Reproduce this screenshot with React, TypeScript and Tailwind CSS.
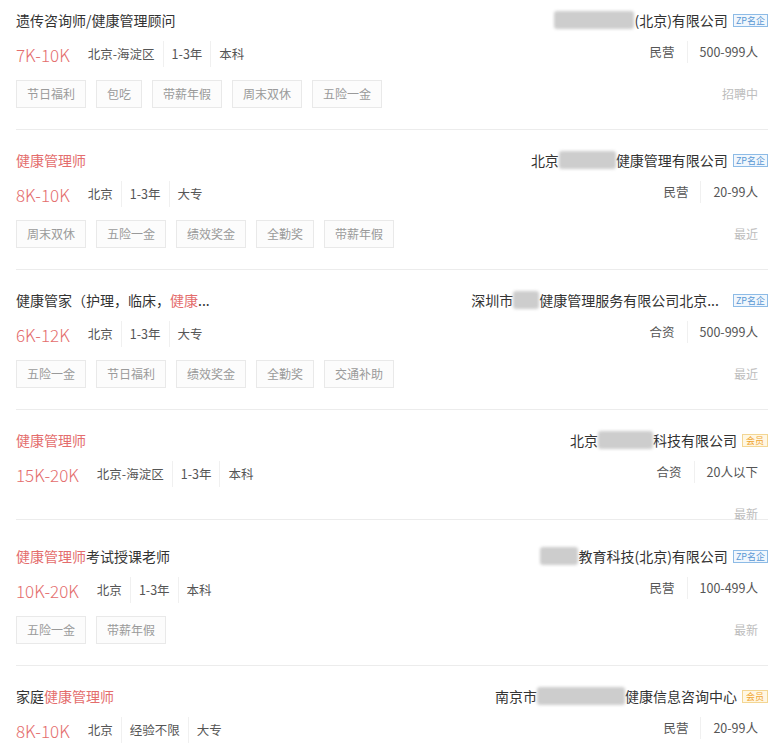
import type { ReactNode } from 'react'

type Part = string | { hl: string } | { blur: number }

type Job = {
  title: Part[]
  salary: string
  meta: string[]
  company: Part[]
  badge: 'zp' | 'vip'
  info: string[]
  tags: string[]
  status: string
  first?: boolean
  short?: boolean
  wideGap?: boolean
}

const jobs: Job[] = [
  {
    title: ['遗传咨询师/健康管理顾问'],
    salary: '7K-10K',
    meta: ['北京-海淀区', '1-3年', '本科'],
    company: [{ blur: 80 }, '(北京)有限公司'],
    badge: 'zp',
    info: ['民营', '500-999人'],
    tags: ['节日福利', '包吃', '带薪年假', '周末双休', '五险一金'],
    status: '招聘中',
    first: true,
  },
  {
    title: [{ hl: '健康管理师' }],
    salary: '8K-10K',
    meta: ['北京', '1-3年', '大专'],
    company: ['北京', { blur: 57 }, '健康管理有限公司'],
    badge: 'zp',
    info: ['民营', '20-99人'],
    tags: ['周末双休', '五险一金', '绩效奖金', '全勤奖', '带薪年假'],
    status: '最近',
  },
  {
    title: ['健康管家（护理，临床，', { hl: '健康' }, '...'],
    salary: '6K-12K',
    meta: ['北京', '1-3年', '大专'],
    company: ['深圳市', { blur: 26 }, '健康管理服务有限公司北京...'],
    badge: 'zp',
    info: ['合资', '500-999人'],
    tags: ['五险一金', '节日福利', '绩效奖金', '全勤奖', '交通补助'],
    status: '最近',
    wideGap: true,
  },
  {
    title: [{ hl: '健康管理师' }],
    salary: '15K-20K',
    meta: ['北京-海淀区', '1-3年', '本科'],
    company: ['北京', { blur: 55 }, '科技有限公司'],
    badge: 'vip',
    info: ['合资', '20人以下'],
    tags: [],
    status: '最新',
    short: true,
  },
  {
    title: [{ hl: '健康管理师' }, '考试授课老师'],
    salary: '10K-20K',
    meta: ['北京', '1-3年', '本科'],
    company: [{ blur: 38 }, '教育科技(北京)有限公司'],
    badge: 'zp',
    info: ['民营', '100-499人'],
    tags: ['五险一金', '带薪年假'],
    status: '最新',
  },
  {
    title: ['家庭', { hl: '健康管理师' }],
    salary: '8K-10K',
    meta: ['北京', '经验不限', '大专'],
    company: ['南京市', { blur: 88 }, '健康信息咨询中心'],
    badge: 'vip',
    info: ['民营', '20-99人'],
    tags: [],
    status: '',
  },
]

function renderParts(parts: Part[]): ReactNode[] {
  return parts.map((p, i) => {
    if (typeof p === 'string') return <span key={i}>{p}</span>
    if ('hl' in p) return <span key={i} className="text-[#e46d6d]">{p.hl}</span>
    return (
      <span
        key={i}
        className="inline-block h-[18px] bg-[#cdcdcd] blur-[1.5px] rounded-[3px] align-middle"
        style={{ width: p.blur }}
      />
    )
  })
}

function Badge({ kind }: { kind: 'zp' | 'vip' }) {
  if (kind === 'zp') {
    return (
      <span className="inline-flex items-center h-[13px] px-[2px] border border-[#8dbbe6] bg-[#f1f7fd] text-[#5a97d4] text-[9px] leading-none">
        ZP名企
      </span>
    )
  }
  return (
    <span className="inline-flex items-center h-[13px] px-[3px] border border-[#f3d693] bg-[#fff7e3] text-[#efa32d] text-[9px] leading-none">
      会员
    </span>
  )
}

function JobItem({ job }: { job: Job }) {
  const hasThirdRow = job.tags.length > 0 || job.status !== ''
  return (
    <div
      className={`border-b border-[#ececec] ${job.first ? 'pt-[10px]' : 'pt-[20px]'} ${
        job.short ? 'h-[110px] mb-[6px]' : 'pb-[21px]'
      }`}
    >
      <div className="flex items-center justify-between h-5">
        <div className="text-[14px] text-[#333] whitespace-nowrap">{renderParts(job.title)}</div>
        <div className={`flex items-center ${job.wideGap ? 'gap-[14px]' : 'gap-[5px]'}`}>
          <div className="text-[14px] text-[#333] whitespace-nowrap flex items-center">
            {renderParts(job.company)}
          </div>
          <Badge kind={job.badge} />
        </div>
      </div>

      <div className="flex items-center justify-between mt-[14px] h-5">
        <div className="flex items-center">
          <span className="text-[17px] text-[#e46d6d] font-light mr-[10px] leading-none">{job.salary}</span>
          {job.meta.map((m, i) => (
            <span
              key={i}
              className={`text-[12.5px] text-[#555] px-2 h-[26px] flex items-center ${
                i > 0 ? 'border-l border-[#f0f0f0]' : ''
              }`}
            >
              {m}
            </span>
          ))}
        </div>
        <div className="flex items-center pr-[10px] -mt-[4px]">
          <span className="text-[12.5px] text-[#555] pr-3 h-[22px] flex items-center">{job.info[0]}</span>
          <span className="text-[12.5px] text-[#555] pl-3 h-[22px] flex items-center border-l border-[#f0f0f0]">
            {job.info[1]}
          </span>
        </div>
      </div>

      {hasThirdRow && (
        <div className="flex items-center justify-between mt-[16px] h-[28px]">
          <div className="flex gap-[10px]">
            {job.tags.map((t) => (
              <span
                key={t}
                className="h-[28px] px-[10px] flex items-center border border-[#e9e9e9] bg-[#fcfcfc] text-[12px] text-[#9a9a9a]"
              >
                {t}
              </span>
            ))}
          </div>
          <span className="pr-[10px] text-[12px] text-[#bdbdbd] whitespace-nowrap">{job.status}</span>
        </div>
      )}
    </div>
  )
}

export default function App() {
  return (
    <div className="min-h-screen bg-white font-['Noto_Sans_CJK_SC',sans-serif]">
      <div className="ml-[16px] w-[752px]">
        {jobs.map((job, i) => (
          <JobItem key={i} job={job} />
        ))}
      </div>
    </div>
  )
}
